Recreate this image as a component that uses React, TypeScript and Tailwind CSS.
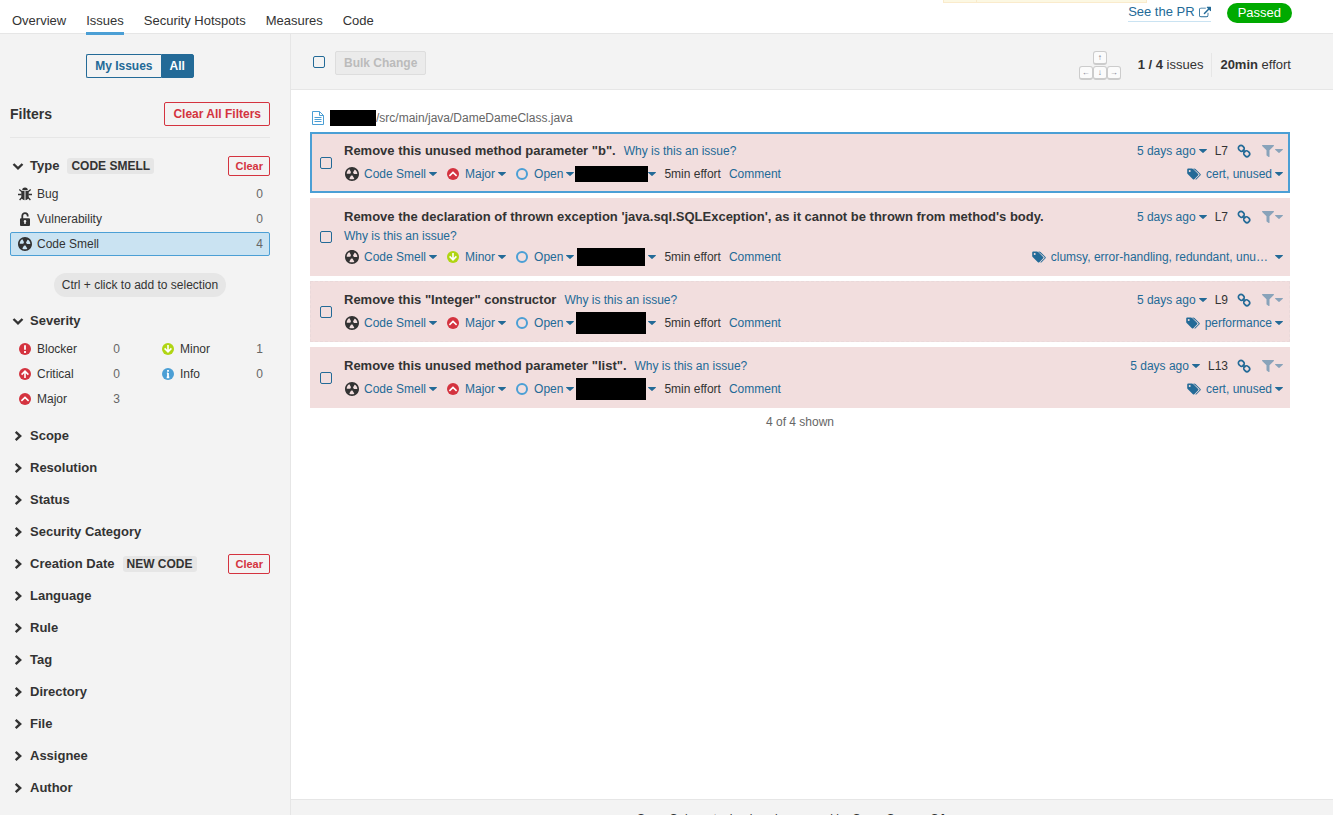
import type { ReactNode } from 'react';
import { FaFilter } from 'react-icons/fa';

type Severity = 'Blocker' | 'Critical' | 'Major' | 'Minor' | 'Info';

interface Issue {
  message: string;
  severity: Severity;
  line: string;
  tags: string;
  frame: string;
  assignee: string;
  stacked?: boolean;
}

const issues: Issue[] = [
  {
    message: 'Remove this unused method parameter "b".',
    severity: 'Major',
    line: 'L7',
    tags: 'cert, unused',
    frame: 'border-solid border-[#4b9fd5]',
    assignee: 'h-4 w-[73px]',
  },
  {
    message:
      "Remove the declaration of thrown exception 'java.sql.SQLException', as it cannot be thrown from method's body.",
    severity: 'Minor',
    line: 'L7',
    tags: 'clumsy, error-handling, redundant, unu…',
    frame: 'border-solid border-transparent',
    assignee: 'h-[18px] w-[68px]',
    stacked: true,
  },
  {
    message: 'Remove this "Integer" constructor',
    severity: 'Major',
    line: 'L9',
    tags: 'performance',
    frame: 'border-solid border-transparent outline-1 -outline-offset-1 outline-dashed outline-[#ead9da]',
    assignee: 'h-[22px] w-[70px]',
  },
  {
    message: 'Remove this unused method parameter "list".',
    severity: 'Major',
    line: 'L13',
    tags: 'cert, unused',
    frame: 'border-solid border-transparent',
    assignee: 'h-[22px] w-[70px]',
  },
];

function CodeSmellIcon() {
  return (
    <svg className="size-[14px] shrink-0" viewBox="2 2 12 12" fill="#333" aria-hidden="true">
      <path d="M8 2C4.7 2 2 4.7 2 8s2.7 6 6 6 6-2.7 6-6-2.7-6-6-6zm-4.3 5.7c-.1 0-.2-.1-.2-.2 0-.4.1-1.2.6-2S5.3 4.200 5.600 4c.2 0 .3 0 .3.1l1.300 2.300c0 .1 0 .2-.1.2-.1.2-.2.3-.3.5-.1.2-.2.4-.2.5 0 .1-.1.2-.2.2l-2.700-.1zM9.900 12c-.3.2-1.100.5-2 .5-.9 0-1.700-.3-2-.5-.1 0-.1-.2-.1-.3l1.300-2.300c0-.1.1-.1.2-.1.2.1.3.1.5.1s.4 0 .5-.1c.1 0 .2 0 .2.1l1.300 2.300c.2.2.2.3.1.3zm2.500-4.100L9.700 8c-.1 0-.2-.1-.2-.2 0-.2-.1-.4-.2-.5 0-.1-.2-.3-.3-.4-.1 0-.1-.1-.1-.2l1.300-2.300c.1-.1.2-.1.3-.1.3.2 1 .7 1.500 1.500s.5 1.600.6 2c-.1.1-.2.1-.2.1z" />
    </svg>
  );
}

function BugIcon() {
  return (
    <svg className="size-[14px] shrink-0" viewBox="0 0 14 14" fill="#333" aria-hidden="true">
      <path d="M4.200 3.200a2.800 2.800 0 0 1 5.600 0z" />
      <path d="M3.300 4h3.200v9.200C4.600 13 3.300 11.700 3.300 9.600zM10.700 4H7.500v9.200c1.900-.2 3.200-1.500 3.200-3.600z" />
      <path
        d="M1.300 2.600l2.600 2.200M12.700 2.600l-2.600 2.200M0 7.500h3.600M14 7.500h-3.600M1.600 13l2.500-2.700M12.400 13l-2.500-2.700"
        fill="none"
        stroke="#333"
        strokeWidth="1.300"
      />
    </svg>
  );
}

function LockIcon() {
  return (
    <svg className="size-[14px] shrink-0" viewBox="0 0 14 14" aria-hidden="true">
      <path d="M4.300 7V3.800a2.700 2.700 0 0 1 5.400 0v.7" fill="none" stroke="#333" strokeWidth="1.800" />
      <path
        fillRule="evenodd"
        fill="#333"
        d="M3 6.200h8a1 1 0 0 1 1 1V13a1 1 0 0 1-1 1H3a1 1 0 0 1-1-1V7.200a1 1 0 0 1 1-1zM7 8a1.300 1.300 0 0 0-.7 2.400V12h1.400v-1.600A1.300 1.300 0 0 0 7 8z"
      />
    </svg>
  );
}

const severityColor: Record<Severity, string> = {
  Blocker: '#d4333f',
  Critical: '#d4333f',
  Major: '#d4333f',
  Minor: '#b0d513',
  Info: '#4b9fd5',
};

const severityMark: Record<Severity, string> = {
  Blocker: 'M6 2.200v4.600M6 8v2',
  Critical: 'M6 10V3.600M2.600 6.600L6 3.200l3.400 3.400',
  Major: 'M2.400 7.800L6 4.400l3.600 3.400',
  Minor: 'M6 2v6.400M2.600 5.400L6 8.800l3.400-3.400',
  Info: 'M6 2v1.800M6 5v4.800M4.900 5.400H6M4.700 9.400h2.600',
};

function SeverityIcon({ level }: { level: Severity }) {
  return (
    <svg className="size-3 shrink-0" viewBox="0 0 12 12" aria-hidden="true">
      <circle cx="6" cy="6" r="6" fill={severityColor[level]} />
      <path
        d={severityMark[level]}
        fill="none"
        stroke="#fff"
        strokeWidth={level === 'Blocker' || level === 'Info' ? 1.8 : 1.6}
      />
    </svg>
  );
}

function Caret() {
  return (
    <svg className="h-1 w-2 shrink-0" viewBox="0 0 8 4" fill="currentColor" aria-hidden="true">
      <path d="M.5 0h7a.4.4 0 0 1 .3.7L4.400 3.850a.5.5 0 0 1-.8 0L.2.7A.4.4 0 0 1 .5 0z" />
    </svg>
  );
}

function Chevron({ open }: { open?: boolean }) {
  return (
    <svg className="size-3 shrink-0" viewBox="0 0 12 12" fill="none" stroke="#333" strokeWidth="2.400" aria-hidden="true">
      <path d={open ? 'M1.500 4L6 8.300 10.500 4' : 'M3.700 1.800L8.200 6l-4.500 4.200'} />
    </svg>
  );
}

function LinkIcon() {
  return (
    <svg className="size-[14px]" viewBox="0 0 14 14" fill="none" stroke="#236a97" strokeWidth="1.700" aria-hidden="true">
      <g transform="rotate(45 7 7)">
        <rect x="0.200" y="4.400" width="6" height="5.200" rx="2.500" />
        <rect x="7.800" y="4.400" width="6" height="5.200" rx="2.500" />
        <path d="M5 7h4" />
      </g>
    </svg>
  );
}

function TagsIcon() {
  return (
    <svg className="size-[14px] shrink-0" viewBox="0 0 14 14" fill="currentColor" aria-hidden="true">
      <path
        fillRule="evenodd"
        d="M.2 2.400a1 1 0 0 1 1-1h3.600c.5 0 1 .2 1.400.6l5 4.900c.4.4.4 1 0 1.400l-3.900 3.900c-.4.4-1 .4-1.400 0L.9 7.300a2 2 0 0 1-.7-1.400zM2.700 2.900a1 1 0 1 0 0 2 1 1 0 0 0 0-2z"
      />
      <path d="M6.300 1.400h.8c.5 0 1 .2 1.400.6l5 4.900c.4.4.4 1 0 1.400l-3.900 3.900c-.4.4-.9.4-1.300.1l4.100-4.100c.3-.3.3-.8 0-1.200z" />
    </svg>
  );
}

function FileIcon() {
  return (
    <svg className="size-[14px]" viewBox="0 0 14 14" fill="none" stroke="#4b9fd5" aria-hidden="true">
      <path d="M1.500.5h7l4 4v9h-11zM8.500.5v4h4M3.500 6.500h7M3.500 8.500h7M3.500 10.500h7" />
    </svg>
  );
}

function Menu({ icon, children, gap = 'gap-[6px]' }: { icon?: ReactNode; children: ReactNode; gap?: string }) {
  return (
    <button type="button" className={`flex items-center text-[#236a97] ${gap}`}>
      {icon}
      <span className="flex items-center gap-[3px]">
        {children}
        <Caret />
      </span>
    </button>
  );
}

function Checkbox({ label }: { label: string }) {
  return (
    <input
      type="checkbox"
      aria-label={label}
      className="block size-3 shrink-0 appearance-none rounded-[2px] border border-[#236a97] checked:bg-[#236a97]"
    />
  );
}

function WhyLink() {
  return (
    <a href="#rule" className="text-xs text-[#236a97]">
      Why is this an issue?
    </a>
  );
}

function IssueRow({ issue }: { issue: Issue }) {
  return (
    <li className={`flex items-center border-2 bg-[#f2dede] pt-[7px] pr-[5px] pb-[7px] pl-2 ${issue.frame}`}>
      <Checkbox label={`Select issue: ${issue.message}`} />
      <div className="ml-3 min-w-0 flex-1">
        <div className="flex items-start justify-between gap-4">
          <div>
            <div className="flex h-5 items-center gap-2">
              <h3 className="text-[13px] font-bold">{issue.message}</h3>
              {!issue.stacked && <WhyLink />}
            </div>
            {issue.stacked && (
              <div className="flex h-[17px] items-center">
                <WhyLink />
              </div>
            )}
          </div>
          <div className="flex h-5 shrink-0 items-center">
            <Menu>5 days ago</Menu>
            <span className="ml-2">{issue.line}</span>
            <a href="#permalink" aria-label="Permalink" className="ml-[9px]">
              <LinkIcon />
            </a>
            <button
              type="button"
              aria-label="Filter similar issues"
              className="ml-[11px] flex items-center gap-px text-[#236a97] opacity-50"
            >
              <FaFilter size={12} />
              <Caret />
            </button>
          </div>
        </div>
        <div className="mt-[3px] flex h-5 items-center justify-between">
          <div className="flex items-center pl-px">
            <Menu icon={<CodeSmellIcon />} gap="gap-[5px]">
              Code Smell
            </Menu>
            <span className="ml-[10px]">
              <Menu icon={<SeverityIcon level={issue.severity} />}>{issue.severity}</Menu>
            </span>
            <span className="ml-[10px]">
              <Menu icon={<span className="size-3 rounded-full border-2 border-[#4b9fd5]" />}>Open</Menu>
            </span>
            <button
              type="button"
              aria-label="Assignee"
              className="-my-1 flex w-[82px] items-center justify-end text-[#236a97]"
            >
              <span className="flex flex-1 justify-center">
                <span className={`bg-black ${issue.assignee}`} />
              </span>
              <Caret />
            </button>
            <span className="ml-2">5min effort</span>
            <button type="button" className="ml-2 text-[#236a97]">
              Comment
            </button>
          </div>
          <Menu icon={<TagsIcon />} gap="gap-[5px]">
            <span className={issue.stacked ? 'mr-1' : ''}>{issue.tags}</span>
          </Menu>
        </div>
      </div>
    </li>
  );
}

function ClearButton() {
  return (
    <button
      type="button"
      className="ml-auto h-5 rounded-[2px] border border-[#d4333f] px-[6px] text-[11px] leading-none font-semibold text-[#d4333f]"
    >
      Clear
    </button>
  );
}

function FacetHeader({ title, badge, open }: { title: string; badge?: string; open?: boolean }) {
  return (
    <div className="flex h-5 items-center">
      <button type="button" aria-expanded={!!open} className="ml-[2px] flex items-center gap-[6px] text-[13px] font-bold">
        <Chevron open={open} />
        {title}
      </button>
      {badge && (
        <>
          <span className="ml-2 rounded-[3px] bg-[#e6e6e6] px-1 leading-4 font-bold">{badge}</span>
          <ClearButton />
        </>
      )}
    </div>
  );
}

function FacetItem({
  icon,
  name,
  count,
  selected,
}: {
  icon: ReactNode;
  name: string;
  count: number;
  selected?: boolean;
}) {
  return (
    <button
      type="button"
      aria-pressed={!!selected}
      className={`flex h-6 w-full items-center rounded-[2px] border px-[6px] ${
        selected ? 'border-[#4b9fd5] bg-[#cae3f2]' : 'border-transparent'
      }`}
    >
      <span className="flex w-4 justify-center">{icon}</span>
      <span className="ml-1">{name}</span>
      <span className="ml-auto text-[#666]">{count}</span>
    </button>
  );
}

function Key({ children }: { children: ReactNode }) {
  return (
    <kbd className="flex size-[14px] items-center justify-center rounded-[3px] border border-b-2 border-[#ccc] bg-[#fbfbfb] font-['Liberation_Sans',sans-serif] text-[8px] leading-none text-[#778]">
      {children}
    </kbd>
  );
}

const tabs = ['Overview', 'Issues', 'Security Hotspots', 'Measures', 'Code'];

const collapsed: { title: string; badge?: string }[] = [
  { title: 'Scope' },
  { title: 'Resolution' },
  { title: 'Status' },
  { title: 'Security Category' },
  { title: 'Creation Date', badge: 'NEW CODE' },
  { title: 'Language' },
  { title: 'Rule' },
  { title: 'Tag' },
  { title: 'Directory' },
  { title: 'File' },
  { title: 'Assignee' },
  { title: 'Author' },
];

function Sidebar() {
  return (
    <aside className="w-[290px] shrink-0 overflow-hidden bg-[#f3f3f3] pt-5 pr-5 pl-[10px]">
      <div className="flex justify-center">
        <button
          type="button"
          className="h-6 rounded-l-[2px] border border-r-0 border-[#236a97] px-2 font-bold text-[#236a97]"
        >
          My Issues
        </button>
        <button
          type="button"
          aria-pressed="true"
          className="h-6 rounded-r-[2px] border border-[#236a97] bg-[#236a97] px-2 font-bold text-white"
        >
          All
        </button>
      </div>
      <div className="mt-6 flex items-center justify-between border-b border-[#e6e6e6] pb-[11px]">
        <h2 className="text-sm leading-6 font-bold">Filters</h2>
        <button type="button" className="h-6 rounded-[2px] border border-[#d4333f] px-2 font-bold text-[#d4333f]">
          Clear All Filters
        </button>
      </div>

      <section className="mt-[18px]">
        <FacetHeader title="Type" badge="CODE SMELL" open />
        <div className="mt-[6px] flex flex-col gap-px">
          <FacetItem icon={<BugIcon />} name="Bug" count={0} />
          <FacetItem icon={<LockIcon />} name="Vulnerability" count={0} />
          <FacetItem icon={<CodeSmellIcon />} name="Code Smell" count={4} selected />
        </div>
        <p className="mx-auto mt-[17px] w-fit rounded-full bg-[#e6e6e6] px-2 leading-6">
          Ctrl + click to add to selection
        </p>
      </section>

      <section className="mt-[14px]">
        <FacetHeader title="Severity" open />
        <div className="mt-[6px] grid grid-cols-2 gap-x-[26px]">
          <div className="flex flex-col gap-px">
            <FacetItem icon={<SeverityIcon level="Blocker" />} name="Blocker" count={0} />
            <FacetItem icon={<SeverityIcon level="Critical" />} name="Critical" count={0} />
            <FacetItem icon={<SeverityIcon level="Major" />} name="Major" count={3} />
          </div>
          <div className="flex flex-col gap-px">
            <FacetItem icon={<SeverityIcon level="Minor" />} name="Minor" count={1} />
            <FacetItem icon={<SeverityIcon level="Info" />} name="Info" count={0} />
          </div>
        </div>
      </section>

      <div className="mt-[15px] flex flex-col gap-3">
        {collapsed.map((facet) => (
          <FacetHeader key={facet.title} title={facet.title} badge={facet.badge} />
        ))}
      </div>
    </aside>
  );
}

export default function App() {
  return (
    <div className="flex h-screen flex-col overflow-hidden bg-white font-['Liberation_Sans',Arial,sans-serif] text-xs text-[#333]">
      <header className="relative flex h-[34px] shrink-0 items-start justify-between border-b border-[#e6e6e6] pr-[41px] pl-3">
        <nav className="flex gap-5 text-[13px]">
          {tabs.map((tab) => (
            <a
              key={tab}
              href={`#${tab}`}
              className={`h-[35px] border-b-3 pt-[11px] leading-5 ${
                tab === 'Issues' ? 'border-[#4b9fd5]' : 'border-transparent'
              }`}
            >
              {tab}
            </a>
          ))}
        </nav>
        <div className="absolute top-0 right-[186px] h-[3px] w-[204px] border border-t-0 border-[#faebcc] bg-[#fcf8e3] pl-8">
          <div className="h-full w-px bg-[#faebcc]" />
        </div>
        <div className="flex items-start gap-4 pt-[3px] text-[13px]">
          <a
            href="#pr"
            className="flex items-center gap-1 border-b border-[#cae3f2] leading-[18px] text-[#236a97]"
          >
            See the PR
            <svg className="size-3" viewBox="1 2 14 12" fill="currentColor" aria-hidden="true">
              <path d="M12 9.250v2.500A2.250 2.250 0 0 1 9.750 14h-6.500A2.250 2.250 0 0 1 1 11.750v-6.500A2.250 2.250 0 0 1 3.250 3h5.500c.14 0 .25.11.25.25v.5c0 .14-.11.25-.25.25h-5.500C2.562 4 2 4.563 2 5.250v6.500c0 .688.563 1.250 1.250 1.250h6.500c.688 0 1.250-.563 1.250-1.250v-2.500c0-.14.11-.25.25-.25h.5c.14 0 .25.11.25.25zm3-6.750v4c0 .273-.227.5-.5.5a.497.497 0 0 1-.352-.148l-1.375-1.375L7.680 10.570a.27.27 0 0 1-.18.078.27.27 0 0 1-.18-.078l-.89-.89a.27.27 0 0 1-.078-.18.27.27 0 0 1 .078-.18l5.093-5.093-1.375-1.375A.497.497 0 0 1 10 2.500c0-.273.227-.5.5-.5h4c.273 0 .5.227.5.5z" />
            </svg>
          </a>
          <span className="rounded-full bg-[#00aa00] px-[11px] leading-5 text-white">Passed</span>
        </div>
      </header>

      <div className="flex min-h-0 flex-1">
        <Sidebar />
        <div className="flex min-w-0 flex-1 flex-col border-l border-[#e6e6e6]">
          <div className="flex h-14 shrink-0 items-center border-b border-[#e6e6e6] bg-[#f3f3f3] pr-[42px] pl-[22px]">
            <Checkbox label="Select all issues" />
            <button
              type="button"
              disabled
              className="mt-[2px] ml-[10px] h-6 rounded-[2px] border border-[#ddd] bg-[#ebebeb] px-2 font-bold text-[#bbb]"
            >
              Bulk Change
            </button>
            <div className="ml-auto flex flex-col items-center gap-px pt-2">
              <Key>↑</Key>
              <div className="flex">
                <Key>←</Key>
                <Key>↓</Key>
                <Key>→</Key>
              </div>
            </div>
            <div className="ml-[17px] flex pt-[6px] text-[13px] leading-6">
              <span className="pr-2">
                <b>1 / 4</b> issues
              </span>
              <span className="border-l border-[#e6e6e6] pl-2">
                <b>20min</b> effort
              </span>
            </div>
          </div>

          <main className="min-h-0 flex-1 pt-[18px] pr-[43px] pl-[19px]">
            <div className="flex h-5 items-center pl-px text-[#666]">
              <FileIcon />
              <span className="ml-[5px] h-4 w-[46px] bg-black" />
              /src/main/java/DameDameClass.java
            </div>
            <ul className="mt-1 flex flex-col gap-[5px]">
              {issues.map((issue) => (
                <IssueRow key={issue.message} issue={issue} />
              ))}
            </ul>
            <p className="mt-[6px] text-center text-[#666]">4 of 4 shown</p>
          </main>

          <footer className="h-4 shrink-0 overflow-hidden border-t border-[#e6e6e6] bg-[#f3f3f3] pt-[11px] pr-10 text-center">
            <p>
              SonarQube™ technology is powered by <b>SonarSource SA</b>
            </p>
          </footer>
        </div>
      </div>
    </div>
  );
}
